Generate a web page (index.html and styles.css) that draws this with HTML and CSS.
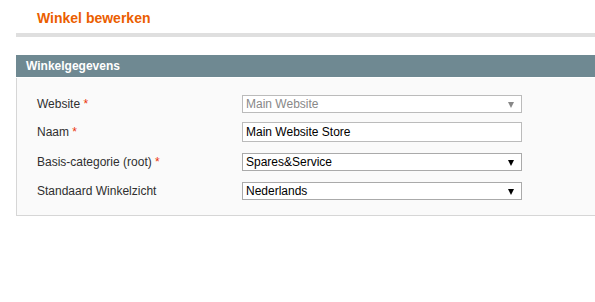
FILE: index.html
```html
<!DOCTYPE html>
<html>
<head>
<meta charset="utf-8">
<link rel="stylesheet" href="styles.css">
</head>
<body>
<div class="page">
  <div class="page-title">
    <h3>Winkel bewerken</h3>
  </div>
  <div class="fieldset-head">Winkelgegevens</div>
  <div class="fieldset">
    <div class="row r1">
      <label class="lbl">Website <span class="req">*</span></label>
      <div class="ctrl select disabled"><span>Main Website</span><i class="arrow"></i></div>
    </div>
    <div class="row r2">
      <label class="lbl">Naam <span class="req">*</span></label>
      <div class="ctrl input"><span>Main Website Store</span></div>
    </div>
    <div class="row r3">
      <label class="lbl">Basis-categorie (root) <span class="req">*</span></label>
      <div class="ctrl select"><span>Spares&amp;Service</span><i class="arrow"></i></div>
    </div>
    <div class="row r4">
      <label class="lbl">Standaard Winkelzicht</label>
      <div class="ctrl select"><span>Nederlands</span><i class="arrow"></i></div>
    </div>
  </div>
</div>
</body>
</html>
```
FILE: styles.css
```css
html, body { margin: 0; padding: 0; background: #fff; overflow: hidden; }
body { font-family: "Liberation Sans", Arial, sans-serif; font-size: 12px; color: #2f2f2f; }
.page { padding-left: 16px; margin-right: -20px; }
.page-title { height: 33px; border-bottom: 4px solid #dfdfdf; box-sizing: content-box; }
.page-title h3 { margin: 0; padding: 10px 0 0 21px; font-size: 14px; line-height: 16px; font-weight: bold; color: #eb5e00; }
.fieldset-head { margin-top: 18px; height: 22px; line-height: 22px; background: #6f8992; color: #fff; font-weight: bold; font-size: 12px; padding-left: 10px; border-bottom: 1px solid #fff; }
.fieldset { background: #fafafa; border: 1px solid #d6d6d6; border-top: 0; padding: 17px 20px 15px 20px; }
.row { display: flex; align-items: center; }
.r1 { margin-bottom: 9px; }
.r2 { margin-bottom: 11px; }
.r3 { margin-bottom: 11px; }
.lbl { width: 205px; color: #2f2f2f; }
.req { color: #eb340a; }
.ctrl { width: 280px; box-sizing: border-box; background: #fff; border: 1px solid #aaa; height: 18px; display: flex; align-items: center; justify-content: space-between; padding: 0 7px 0 3px; color: #000; font-size: 12px; }
.ctrl.input { height: 20px; border-color: #bbb; }
.ctrl.disabled { color: #888; border-color: #bbb; }
.arrow { width: 0; height: 0; border-left: 3px solid transparent; border-right: 3px solid transparent; border-top: 6px solid #000; margin-top: 1px; }
.disabled .arrow { border-top-color: #888; }
```
